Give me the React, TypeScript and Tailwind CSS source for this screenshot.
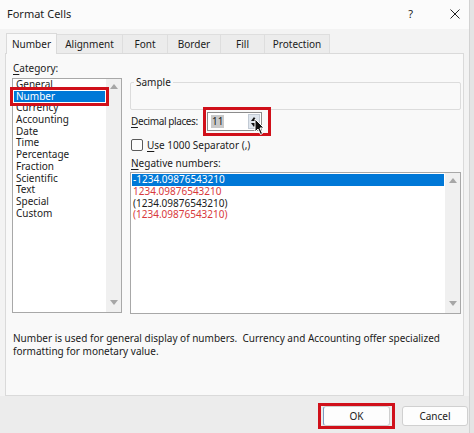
import React from 'react';

const CATEGORIES = ['General', 'Number', 'Currency', 'Accounting', 'Date', 'Time', 'Percentage', 'Fraction', 'Scientific', 'Text', 'Special', 'Custom'];

const NEGATIVES = [
  { text: '-1234.09876543210', red: false, selected: true },
  { text: '1234.09876543210', red: true, selected: false },
  { text: '(1234.09876543210)', red: false, selected: false },
  { text: '(1234.09876543210)', red: true, selected: false },
];

const TABS = [
  { label: 'Number', w: 'w-[51px]' },
  { label: 'Alignment', w: 'w-[66px]' },
  { label: 'Font', w: 'w-[45px]' },
  { label: 'Border', w: 'w-[53px]' },
  { label: 'Fill', w: 'w-[44px]' },
  { label: 'Protection', w: 'w-[65px]' },
];

function ScrollBar() {
  return (
    <div className="w-[15px] shrink-0 self-stretch bg-[#f0f0f0] flex flex-col items-center justify-between pt-[5px] pb-[7px]">
      <svg width="8" height="5" viewBox="0 0 8 5">
        <polygon points="0,5 4,0 8,5" fill="#a6a6a6" />
      </svg>
      <svg width="8" height="5" viewBox="0 0 8 5">
        <polygon points="0,0 8,0 4,5" fill="#a6a6a6" />
      </svg>
    </div>
  );
}

export default function App() {
  return (
    <div className="w-[474px] h-[433px] overflow-hidden bg-[#e4e4e4] font-['Noto_Sans','Open_Sans',sans-serif] text-[10px] text-[#1b1b1b]">
      <div className="w-[470px] h-full flex flex-col bg-[#f3f3f3] border-r border-[#d2d2d2]">
        {/* title bar */}
        <div className="h-[29px] shrink-0 bg-[#fbfbfb] flex items-center pl-[7px] pr-[9px] text-[11px]">
          <span>Format Cells</span>
          <span className="ml-auto mr-[37px]">?</span>
          <svg width="10" height="10" viewBox="0 0 10 10" className="mb-[1px]">
            <path d="M0.5 0.5 L9.5 9.5 M9.5 0.5 L0.5 9.5" stroke="#222" strokeWidth="1" />
          </svg>
        </div>

        {/* tabs */}
        <div className="h-[24px] shrink-0 flex items-end pl-[6px]">
          {TABS.map((t, i) =>
            i === 0 ? (
              <div
                key={t.label}
                className={`${t.w} h-[21px] -mb-px relative z-10 bg-[#f9f9f9] border border-b-0 border-[#dadada] flex items-center justify-center`}
              >
                {t.label}
              </div>
            ) : (
              <div
                key={t.label}
                className={`${t.w} h-[19px] bg-[#ececec] border-r border-t border-[#dedede] flex items-center justify-center`}
              >
                {t.label}
              </div>
            ),
          )}
        </div>

        {/* tab panel */}
        <div className="mx-[5px] h-[343px] shrink-0 bg-[#f9f9f9] border border-[#dadada] pt-[7px] pl-[6px]">
          <div className="flex gap-[8px]">
            {/* category column */}
            <div className="w-[110px] flex flex-col">
              <div className="h-[14px] leading-[14px] mb-[3px] ml-[1px]">
                <u className="underline-offset-2">C</u>ategory:
              </div>
              <div className="h-[235px] bg-white border border-[#a8a8a8] flex">
                <div className="flex-1 pl-[1px] pr-[1px]">
                  {CATEGORIES.map((c) =>
                    c === 'Number' ? (
                      <div key={c} className="relative h-[11.7px] leading-[11.7px] bg-[#0078d7] text-white pl-[2px]">
                        {c}
                        <span className="absolute -left-[4px] -right-[4px] -top-[4px] -bottom-[4px] border-[3px] border-[#d0101a]" />
                      </div>
                    ) : (
                      <div key={c} className="h-[11.7px] leading-[11.7px] pl-[2px]">
                        {c}
                      </div>
                    ),
                  )}
                </div>
                <ScrollBar />
              </div>
            </div>

            {/* right column */}
            <div className="w-[331px] flex flex-col">
              <fieldset className="mt-[14px] h-[35px] border border-[#dcdcdc] rounded-[2px]">
                <legend className="ml-[3px] px-[2px] leading-[14px]">Sample</legend>
              </fieldset>

              <div className="-mt-[3px] flex items-center">
                <span className="ml-[1px] w-[72px] shrink-0 whitespace-nowrap tracking-[-0.4px]">
                  <u className="underline-offset-2">D</u>ecimal places:
                </span>
                <div className="relative border-[3px] border-[#d0101a] pl-[1px] pr-[6px] py-[2px]">
                  <div className="w-[55px] h-[19px] bg-white border border-[#8c8c8c] flex items-center pl-[3px]">
                    <span className="bg-[#c9c9c9] px-[1px] leading-[13px]">11</span>
                    <div className="ml-auto mr-[1px] w-[12px] h-[15px] bg-[#dfe6ee] border border-[#c2cad4] flex flex-col items-center justify-center gap-[2px]">
                      <svg width="6" height="4" viewBox="0 0 6 4">
                        <polygon points="0,4 3,0 6,4" fill="#111" />
                      </svg>
                      <svg width="6" height="4" viewBox="0 0 6 4">
                        <polygon points="0,0 6,0 3,4" fill="#111" />
                      </svg>
                    </div>
                  </div>
                  <svg width="12" height="18" viewBox="0 0 12 18" className="absolute left-[48px] top-[8px]">
                    <path d="M1 1 L1 14 L4 11 L6.5 16.5 L8.5 15.5 L6 10 L10 10 Z" fill="#111" stroke="#fff" strokeWidth="1" />
                  </svg>
                </div>
              </div>

              <label className="mt-[2px] h-[14px] flex items-center gap-[4px]">
                <span className="ml-[1px] w-[12px] h-[12px] bg-[#fdfdfd] border border-[#5a5a5a] rounded-[2px]" />
                <span>
                  <u className="underline-offset-2">U</u>se 1000 Separator (,)
                </span>
              </label>

              <div className="mt-[4px] h-[14px] leading-[14px] ml-[1px]">
                <u className="underline-offset-2">N</u>egative numbers:
              </div>

              <div className="mt-[2px] h-[142px] bg-white border border-[#a8a8a8] flex">
                <div className="flex-1 pt-[1px] pl-[1px] pr-[1px]">
                  {NEGATIVES.map((n, i) => (
                    <div
                      key={i}
                      className={
                        n.selected
                          ? 'h-[11.8px] leading-[11.8px] bg-[#0078d7] text-white pl-[1px]'
                          : n.red
                            ? 'h-[11.8px] leading-[11.8px] text-[#d8393c] pl-[1px]'
                            : 'h-[11.8px] leading-[11.8px] pl-[1px]'
                      }
                    >
                      {n.text}
                    </div>
                  ))}
                </div>
                <ScrollBar />
              </div>
            </div>
          </div>

          <p className="mt-[18px] ml-[1px] leading-[13px] w-[440px]">
            Number is used for general display of numbers.&nbsp; Currency and Accounting offer specialized formatting for
            monetary value.
          </p>
        </div>

        {/* footer */}
        <div className="flex-1 bg-[#ececec] flex items-start justify-end pt-[7px] pr-[1px]">
          <div className="border-[3px] border-[#d0101a] px-[2px]">
            <button className="w-[67px] h-[20px] bg-[#fdfdfd] border border-[#cfcfcf] border-l-[#7a9cc2] rounded-[3px]">
              OK
            </button>
          </div>
          <button className="ml-[7px] mt-[3px] w-[66px] h-[20px] bg-[#fdfdfd] border border-[#d0d0d0] rounded-[3px]">
            Cancel
          </button>
        </div>
      </div>
    </div>
  );
}
